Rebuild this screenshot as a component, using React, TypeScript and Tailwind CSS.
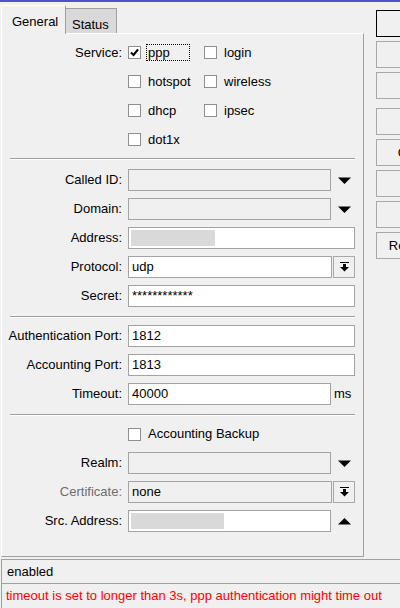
import React from "react";

const FONT = { fontFamily: '"Liberation Sans", Arial, sans-serif' };

function DownTri() {
  return (
    <svg width="13" height="7" viewBox="0 0 13 7">
      <polygon points="0,0.5 13,0.5 6.5,7" fill="#000" />
    </svg>
  );
}

function UpTri() {
  return (
    <svg width="13" height="7" viewBox="0 0 13 7">
      <polygon points="0,6.5 13,6.5 6.5,0" fill="#000" />
    </svg>
  );
}

function ListIcon() {
  return (
    <svg width="9" height="10" viewBox="0 0 9 10">
      <rect x="0" y="0" width="9" height="1" fill="#000" />
      <rect x="3" y="2" width="3" height="3" fill="#000" />
      <polygon points="0,5 9,5 4.5,9.5" fill="#000" />
    </svg>
  );
}

function Checkbox({ checked = false }: { checked?: boolean }) {
  return (
    <div className="w-[13px] h-[13px] bg-white border border-[#8f8f8f] flex items-center justify-center shrink-0">
      {checked && (
        <svg width="11" height="11" viewBox="0 0 11 11">
          <polyline points="2,5.5 4.5,8 9,2.5" fill="none" stroke="#000" strokeWidth="2" />
        </svg>
      )}
    </div>
  );
}

function Check({ label, checked, focus }: { label: string; checked?: boolean; focus?: boolean }) {
  return (
    <div className="flex items-center">
      <Checkbox checked={checked} />
      {focus ? (
        <span className="ml-[5px] w-[44px] h-[17px] border border-dotted border-black pl-[1px] leading-[15px]">
          {label}
        </span>
      ) : (
        <span className="ml-[7px]">{label}</span>
      )}
    </div>
  );
}

function Separator() {
  return <div className="ml-[8px] mr-[8px] border-t border-[#a0a0a0] border-b border-b-white" />;
}

function Row({
  label,
  children,
  dim,
}: {
  label?: string;
  children: React.ReactNode;
  dim?: boolean;
}) {
  return (
    <div className="flex items-center h-[22px]">
      <div className={`w-[120px] text-right whitespace-nowrap ${dim ? "text-[#6d6d6d]" : "text-black"}`}>
        {label}
      </div>
      <div className="ml-[6px] mr-[8px] flex-1 flex items-center h-full">{children}</div>
    </div>
  );
}

function Field({ value, white = true, blur, grow = true }: { value?: string; white?: boolean; blur?: number; grow?: boolean }) {
  return (
    <div
      className={`h-[22px] border border-[#a3a3a3] flex items-center pl-[3px] ${grow ? "flex-1" : ""} ${
        white ? "bg-white" : "bg-[#f0f0f0]"
      }`}
    >
      {blur ? <div className="h-[16px] bg-[#d9d9d9] -ml-[1px]" style={{ width: blur }} /> : value}
    </div>
  );
}

function SideButton({ label, primary, className = "" }: { label: string; primary?: boolean; className?: string }) {
  return (
    <div
      className={`w-[100px] h-[27px] shrink-0 flex items-center justify-center bg-[#f0f0f0] border ${
        primary ? "border-black" : "border-[#a8a8a8]"
      } ${className}`}
    >
      {label}
    </div>
  );
}

export default function App() {
  return (
    <div className="w-[400px] h-[608px] overflow-hidden bg-[#f0f0f0] flex flex-col text-[13px] text-black" style={FONT}>
      <div className="h-[2px] bg-[#5050d0] shrink-0" />

      {/* MAIN */}
      <div className="flex h-[557px] shrink-0">
        <div className="w-[364px] shrink-0 pl-[1px] flex flex-col">
          {/* TABS */}
          <div className="flex items-end h-[31px] pt-[3px]">
            <div className="relative z-10 -mb-[1px] w-[65px] h-[29px] bg-[#f0f0f0] border-l border-t border-white border-r border-r-[#a0a0a0] flex items-start pt-[6px] pl-[10px]">
              General
            </div>
            <div className="w-[51px] h-[25px] bg-[#d9d9d9] border-t border-r border-[#a0a0a0] flex items-start pt-[6px] pl-[6px]">
              Status
            </div>
          </div>

          {/* PANEL */}
          <div className="h-[524px] border-t border-l border-white border-r border-b border-r-[#a0a0a0] border-b-[#a0a0a0] flex flex-col">
            <div className="pt-[4px] flex">
              <div className="w-[120px] text-right h-[29px] flex items-center justify-end">Service:</div>
              <div className="ml-[6px] grid grid-cols-[76px_1fr]">
                <div className="h-[29px] flex items-center">
                  <Check label="ppp" checked focus />
                </div>
                <div className="h-[29px] flex items-center">
                  <Check label="login" />
                </div>
                <div className="h-[29px] flex items-center">
                  <Check label="hotspot" />
                </div>
                <div className="h-[29px] flex items-center">
                  <Check label="wireless" />
                </div>
                <div className="h-[29px] flex items-center">
                  <Check label="dhcp" />
                </div>
                <div className="h-[29px] flex items-center">
                  <Check label="ipsec" />
                </div>
                <div className="h-[29px] flex items-center">
                  <Check label="dot1x" />
                </div>
              </div>
            </div>

            <div className="mt-[4px]">
              <Separator />
            </div>

            <div className="mt-[9px] flex flex-col gap-[7px]">
              <Row label="Called ID:">
                <Field white={false} />
                <div className="w-[24px] flex justify-center pl-[2px]">
                  <DownTri />
                </div>
              </Row>
              <Row label="Domain:">
                <Field white={false} />
                <div className="w-[24px] flex justify-center pl-[2px]">
                  <DownTri />
                </div>
              </Row>
              <Row label="Address:">
                <Field blur={84} />
              </Row>
              <Row label="Protocol:">
                <Field value="udp" />
                <div className="ml-[1px] w-[22px] h-[22px] border border-[#a8a8a8] bg-[#f0f0f0] flex items-center justify-center">
                  <ListIcon />
                </div>
              </Row>
              <Row label="Secret:">
                <Field value="************" />
              </Row>
            </div>

            <div className="mt-[9px]">
              <Separator />
            </div>

            <div className="mt-[7px] flex flex-col gap-[7px]">
              <Row label="Authentication Port:">
                <Field value="1812" />
              </Row>
              <Row label="Accounting Port:">
                <Field value="1813" />
              </Row>
              <Row label="Timeout:">
                <Field value="40000" />
                <div className="w-[24px] pl-[3px]">ms</div>
              </Row>
            </div>

            <div className="mt-[9px]">
              <Separator />
            </div>

            <div className="mt-[7px] flex flex-col gap-[7px]">
              <Row>
                <Check label="Accounting Backup" />
              </Row>
              <Row label="Realm:">
                <Field white={false} />
                <div className="w-[24px] flex justify-center pl-[2px]">
                  <DownTri />
                </div>
              </Row>
              <Row label="Certificate:" dim>
                <Field value="none" white={false} />
                <div className="ml-[1px] w-[22px] h-[22px] border border-[#a8a8a8] bg-[#f0f0f0] flex items-center justify-center">
                  <ListIcon />
                </div>
              </Row>
              <Row label="Src. Address:">
                <Field blur={93} />
                <div className="w-[24px] flex justify-center pl-[2px]">
                  <UpTri />
                </div>
              </Row>
            </div>
          </div>
        </div>

        {/* BUTTONS */}
        <div className="ml-[12px] pt-[8px] flex flex-col gap-[4px]">
          <SideButton label="OK" primary />
          <SideButton label="Cancel" />
          <SideButton label="Apply" />
          <SideButton label="Disable" className="mt-[5px]" />
          <SideButton label="Comment" />
          <SideButton label="Copy" />
          <SideButton label="Remove" />
          <SideButton label="Reset Status" />
        </div>
      </div>

      {/* STATUS BAR */}
      <div className="flex-1 ml-[1px] border-l border-t border-[#a0a0a0] flex flex-col">
        <div className="h-[24px] flex items-center pl-[5px] border-b border-[#a0a0a0]">enabled</div>
        <div className="flex-1 flex items-center pl-[4px] text-[#ff0000] whitespace-nowrap">
          timeout is set to longer than 3s, ppp authentication might time out
        </div>
      </div>
    </div>
  );
}
